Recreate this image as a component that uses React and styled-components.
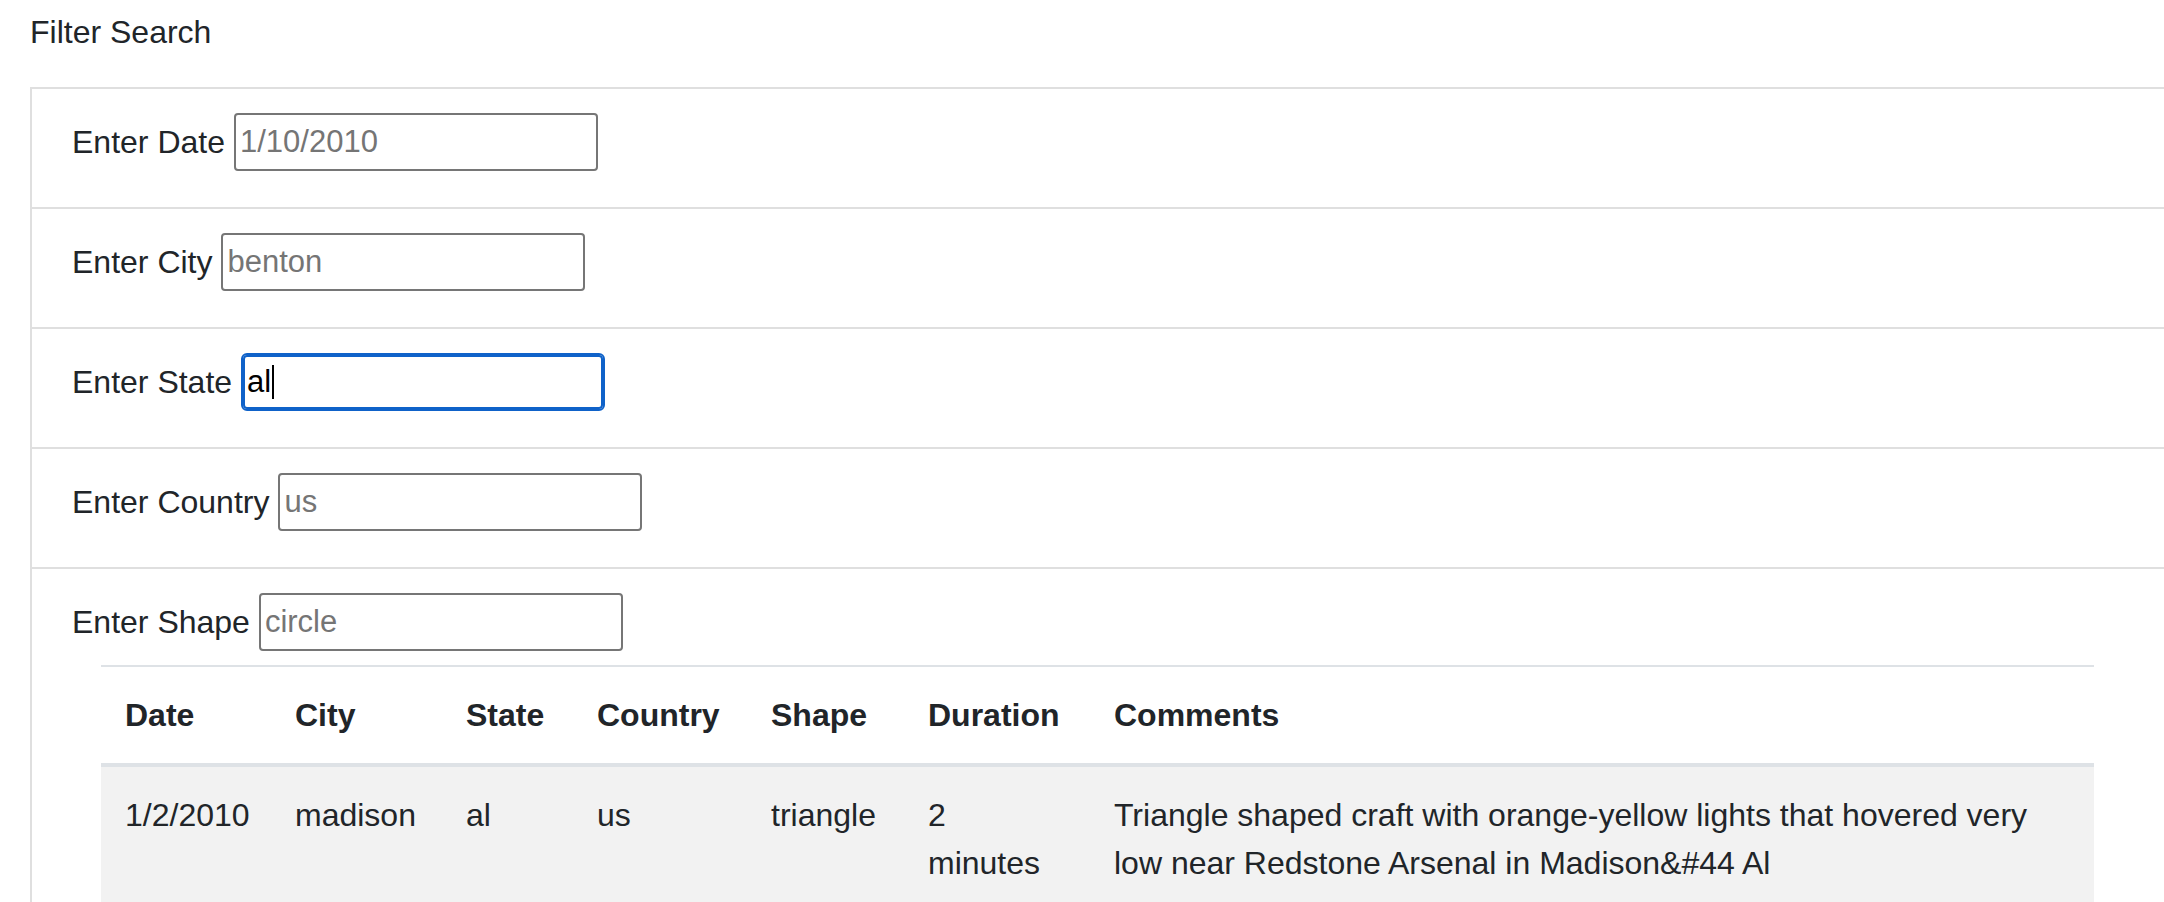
/* STYLED-COMPONENTS */
import styled, { createGlobalStyle } from 'styled-components'

/* GLOBAL */
const GlobalStyle = createGlobalStyle`
  html,
  body {
    margin: 0;
    padding: 0;
    overflow: hidden;
    background-color: #ffffff;
  }

  body {
    font-family: "Liberation Sans", Arial, sans-serif;
    font-size: 32px;
    line-height: 1.5;
    color: #212529;
  }

  * {
    box-sizing: border-box;
  }
`

/* COLORS */
const colors = {
  text: '#212529',
  listBorder: '#dfdfdf',
  tableBorder: '#dee2e6',
  stripe: '#f2f2f2',
  inputBorder: '#767676',
  placeholder: '#757575',
  focus: '#0f62c9',
}

/* PAGE */
const Page = styled.div`
  padding: 8px 30px 0;
`

/* TITLE */
const Title = styled.div`
  line-height: 48px;
  margin-bottom: 31px;
`

/* LIST */
const List = styled.ul`
  width: 2240px;
  margin: 0;
  padding: 0;
  list-style: none;
`

/* ITEM */
const Item = styled.li`
  padding: 24px 40px 36px;
  border: 2px solid ${colors.listBorder};

  & + & {
    border-top-width: 0;
  }
`

/* FIELD */
const Field = styled.div`
  display: flex;
  align-items: center;
  gap: 9px;
`

/* LABEL */
const Label = styled.label`
  line-height: 48px;
  white-space: nowrap;
`

/* INPUT WRAP */
const InputWrap = styled.div`
  position: relative;
`

/* INPUT */
const Input = styled.input`
  display: block;
  width: 364px;
  height: 58px;
  padding: 0 4px;
  margin: 0;

  font-family: inherit;
  font-size: 31px;
  color: #000000;
  background-color: #ffffff;
  caret-color: transparent;

  border: 2px solid
    ${({ $focused }) => ($focused ? colors.focus : colors.inputBorder)};
  border-radius: ${({ $focused }) => ($focused ? '6px' : '4px')};
  box-shadow: ${({ $focused }) =>
    $focused ? `inset 0 0 0 2px ${colors.focus}` : 'none'};
  outline: none;

  &::placeholder {
    color: ${colors.placeholder};
    opacity: 1;
  }
`

/* CARET */
const Caret = styled.span`
  position: absolute;
  left: 31px;
  top: 12px;
  width: 2px;
  height: 34px;
  background-color: #000000;
`

/* TABLE */
const Table = styled.table`
  width: 1993px;
  margin: 14px 0 0 29px;
  table-layout: fixed;
  border-collapse: separate;
  border-spacing: 0;
  color: ${colors.text};
`

/* HEAD CELL */
const Th = styled.th`
  padding: 24px;
  text-align: left;
  vertical-align: bottom;
  font-weight: 700;
  border-top: 2px solid ${colors.tableBorder};
  border-bottom: 4px solid ${colors.tableBorder};
`

/* ROW */
const Row = styled.tr`
  background-color: ${({ $striped }) =>
    $striped ? colors.stripe : 'transparent'};
`

/* CELL */
const Td = styled.td`
  padding: 24px;
  vertical-align: top;
`

/* FILTERS */
const filters = [
  { id: 'datetime', label: 'Enter Date', placeholder: '1/10/2010' },
  { id: 'city', label: 'Enter City', placeholder: 'benton' },
  { id: 'state', label: 'Enter State', placeholder: 'ca', value: 'al' },
  { id: 'country', label: 'Enter Country', placeholder: 'us' },
  { id: 'shape', label: 'Enter Shape', placeholder: 'circle' },
]

/* COLUMNS */
const columns = [
  { title: 'Date', width: 170 },
  { title: 'City', width: 171 },
  { title: 'State', width: 131 },
  { title: 'Country', width: 174 },
  { title: 'Shape', width: 157 },
  { title: 'Duration', width: 186 },
  { title: 'Comments' },
]

/* SIGHTINGS */
const sightings = [
  {
    date: '1/2/2010',
    city: 'madison',
    state: 'al',
    country: 'us',
    shape: 'triangle',
    duration: '2 minutes',
    comments:
      'Triangle shaped craft with orange-yellow lights that hovered very low near Redstone Arsenal in Madison&#44 Al',
  },
]

/* FILTER FIELD */
function FilterField({ filter }) {
  const focused = filter.value !== undefined

  return (
    <Field>
      <Label htmlFor={filter.id}>{filter.label}</Label>
      <InputWrap>
        <Input
          id={filter.id}
          type="text"
          placeholder={filter.placeholder}
          defaultValue={filter.value}
          $focused={focused}
        />
        {focused && <Caret />}
      </InputWrap>
    </Field>
  )
}

/* APP */
function App() {
  const last = filters.length - 1

  return (
    <Page>
      <GlobalStyle />

      {/* HEADER */}
      <Title>Filter Search</Title>

      {/* FILTERS */}
      <List>
        {filters.map((filter, index) => (
          <Item key={filter.id}>
            <FilterField filter={filter} />

            {/* TABLE */}
            {index === last && (
              <Table>
                <colgroup>
                  {columns.map((column) => (
                    <col
                      key={column.title}
                      style={column.width ? { width: column.width } : undefined}
                    />
                  ))}
                </colgroup>
                <thead>
                  <tr>
                    {columns.map((column) => (
                      <Th key={column.title}>{column.title}</Th>
                    ))}
                  </tr>
                </thead>
                <tbody>
                  {sightings.map((sighting, i) => (
                    <Row key={i} $striped={i % 2 === 0}>
                      <Td>{sighting.date}</Td>
                      <Td>{sighting.city}</Td>
                      <Td>{sighting.state}</Td>
                      <Td>{sighting.country}</Td>
                      <Td>{sighting.shape}</Td>
                      <Td>{sighting.duration}</Td>
                      <Td>{sighting.comments}</Td>
                    </Row>
                  ))}
                </tbody>
              </Table>
            )}
          </Item>
        ))}
      </List>
    </Page>
  )
}

export default App
